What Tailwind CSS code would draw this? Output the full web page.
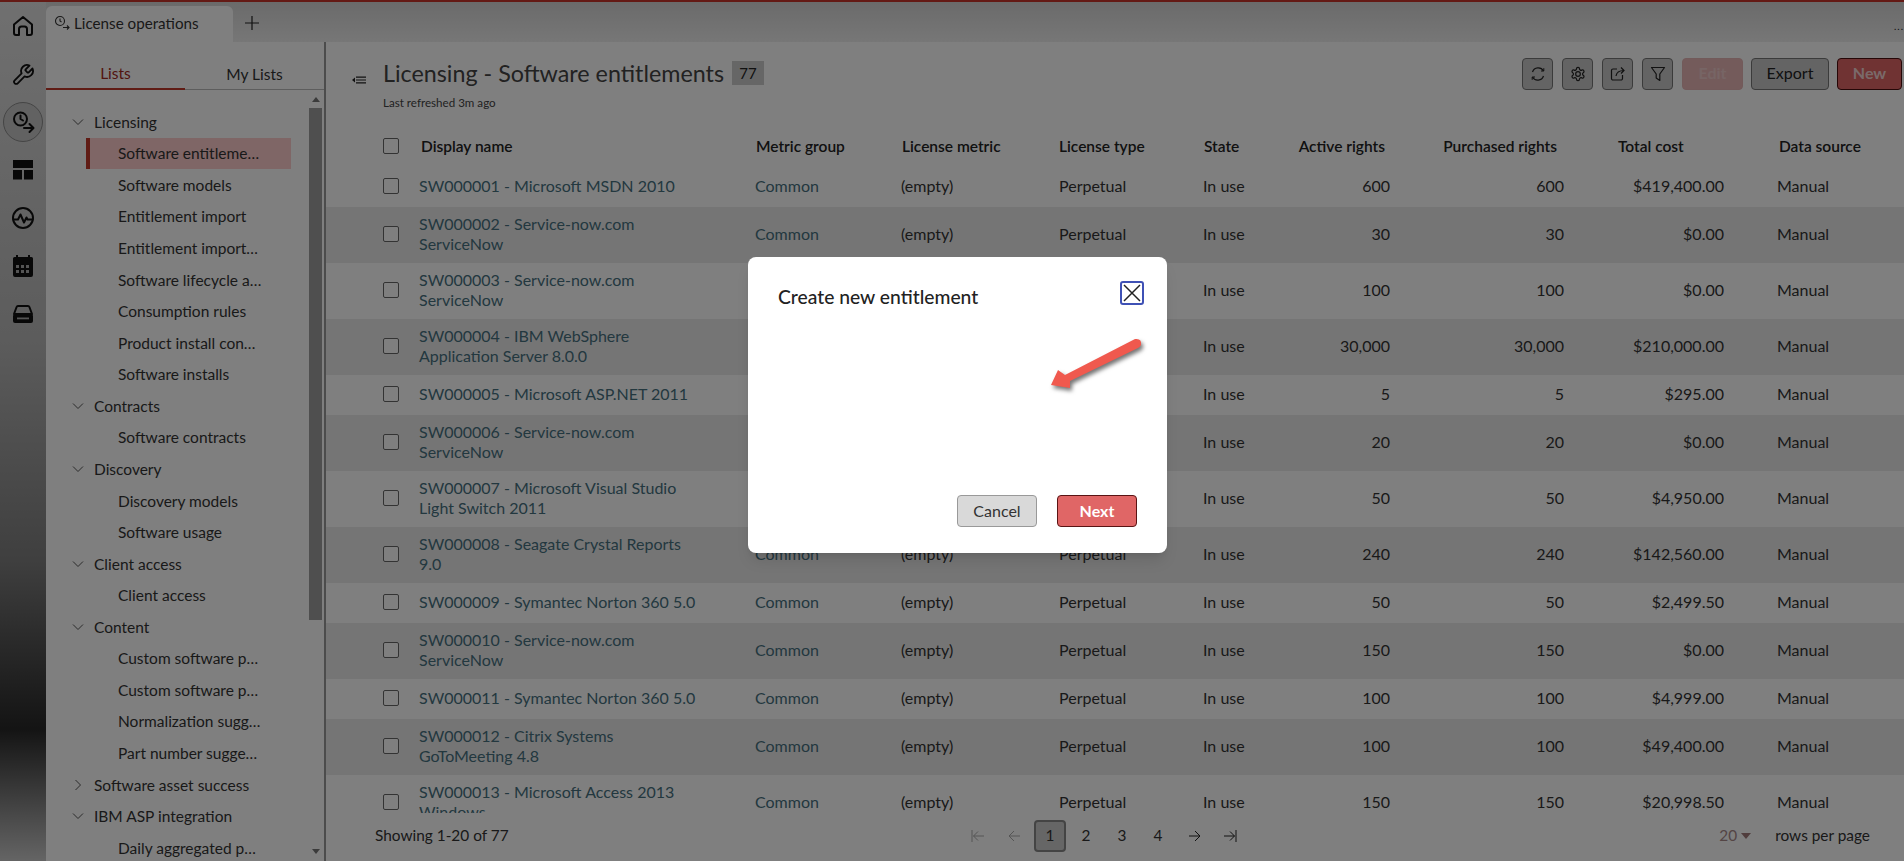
<!doctype html>
<html lang="en">
<head>
<meta charset="utf-8">
<title>License operations</title>
<script src="https://cdn.jsdelivr.net/npm/@tailwindcss/browser@4"></script>
</head>
<body class="relative h-[861px] w-[1904px] overflow-hidden bg-white font-['Lato',sans-serif] text-[#333]">
<div class="flex h-full flex-col">
  <div class="h-[2px] shrink-0 bg-[#c8352b]"></div>
  <div class="flex min-h-0 flex-1">
    <!-- rail -->
    <nav class="flex w-[46px] shrink-0 flex-col items-center bg-[linear-gradient(180deg,#e0e0e0_0,#b8b8b8_340px,#7e7e7e_560px,#282828_727px,#cccccc_861px)] pt-[8px] text-[#111]">
      <div class="flex h-[32px] w-[32px] items-center justify-center">
        <svg class="h-[24px] w-[24px]" viewBox="0 0 24 24" fill="none" stroke="currentColor" stroke-width="2" stroke-linejoin="round"><path d="M3 10.500 12 3l9 7.500V19a2 2 0 0 1-2 2h-3v-6a2.500 2.500 0 0 0-2.500-2.500h-3A2.500 2.500 0 0 0 8 15v6H5a2 2 0 0 1-2-2z"/></svg>
      </div>
      <div class="mt-[16px] flex h-[32px] w-[32px] items-center justify-center">
        <svg class="h-[24px] w-[24px] translate-y-[1px]" viewBox="0 0 24 24" fill="none" stroke="currentColor" stroke-width="1.800" stroke-linejoin="round"><path d="M14.700 6.300a1 1 0 0 0 0 1.400l1.600 1.600a1 1 0 0 0 1.400 0l3.800-3.800a6 6 0 0 1-7.900 7.900l-6.900 6.900a2.100 2.100 0 0 1-3-3l6.900-6.900a6 6 0 0 1 7.900-7.900z"/></svg>
      </div>
      <div class="mt-[12px] flex h-[40px] w-[40px] items-center justify-center rounded-full border border-[#8a8a8a] bg-[#c4c4c4]">
        <svg class="h-[24px] w-[24px]" viewBox="0 0 24 24" fill="none" stroke="currentColor" stroke-width="2" stroke-linecap="round" stroke-linejoin="round"><circle cx="9.500" cy="9" r="6.500"/><path d="M9.500 5.500V9l2.500 1.500M13 18h9M18.500 14l4 4-4 4"/></svg>
      </div>
      <div class="mt-[12px] flex h-[32px] w-[32px] items-center justify-center">
        <svg class="h-[22px] w-[22px]" viewBox="0 0 22 22" fill="currentColor"><rect x="1" y="1" width="20" height="8"/><rect x="1" y="11" width="9" height="9.500"/><rect x="12" y="11" width="9" height="9.500"/></svg>
      </div>
      <div class="mt-[16px] flex h-[32px] w-[32px] items-center justify-center">
        <svg class="h-[24px] w-[24px]" viewBox="0 0 24 24" fill="none" stroke="currentColor" stroke-width="2" stroke-linejoin="round" stroke-linecap="round"><circle cx="12" cy="12" r="10"/><path d="M2.500 13.500H7l2.500-5 3.500 8 2.500-5 1 2h5"/></svg>
      </div>
      <div class="mt-[16px] flex h-[32px] w-[32px] items-center justify-center">
        <svg class="h-[24px] w-[24px]" viewBox="0 0 24 24"><path fill="currentColor" d="M5 1h2v2h10V1h2v2h1.500A1.500 1.500 0 0 1 22 4.500V21a2 2 0 0 1-2 2H4a2 2 0 0 1-2-2V4.500A1.500 1.500 0 0 1 3.500 3H5z"/><g fill="#aaa"><rect x="5" y="11" width="3" height="3"/><rect x="10" y="11" width="3" height="3"/><rect x="15" y="11" width="3" height="3"/><rect x="5" y="16" width="3" height="3"/><rect x="10" y="16" width="3" height="3"/><rect x="15" y="16" width="3" height="3"/></g></svg>
      </div>
      <div class="mt-[16px] flex h-[32px] w-[32px] items-center justify-center">
        <svg class="h-[24px] w-[24px]" viewBox="0 0 24 24"><path d="M7 4h10a1.500 1.500 0 0 1 1.400 1L21 12H3l2.600-7A1.500 1.500 0 0 1 7 4z" fill="none" stroke="currentColor" stroke-width="2" stroke-linejoin="round"/><rect x="2" y="12" width="20" height="9" rx="2" fill="currentColor"/><rect x="6" y="15.500" width="12" height="1.800" fill="#aaa"/></svg>
      </div>
    </nav>

    <div class="flex min-w-0 flex-1 flex-col">
      <!-- tab bar -->
      <div class="flex h-[40px] shrink-0 items-end bg-linear-to-b from-[#d6d6d6] to-[#eeeeee]">
        <div class="flex h-[36px] w-[187px] items-center rounded-t-[6px] bg-white pb-[2px] pl-[8px] text-[15.200px]">
          <svg class="mr-[4px] h-[16px] w-[16px] shrink-0" viewBox="0 0 16 16" fill="none" stroke="currentColor" stroke-width="1.100"><circle cx="6" cy="6" r="4.500"/><path d="M6 3.500V6l1.500 1M9 12.500h6M13 10.500l2 2-2 2"/></svg>
          <span>License operations</span>
        </div>
        <div class="flex h-[36px] w-[38px] items-center justify-center pb-[2px]">
          <svg class="h-[14px] w-[14px]" viewBox="0 0 14 14" fill="none" stroke="#222" stroke-width="1.200"><path d="M7 0v14M0 7h14"/></svg>
        </div>
        <div class="ml-auto pb-[11px] text-[10px] leading-none tracking-[1px] text-[#222]">...</div>
      </div>

      <div class="flex min-h-0 flex-1">
        <!-- sidebar -->
        <aside class="relative flex w-[280px] shrink-0 flex-col border-r-2 border-[#999] bg-white">
          <div class="flex h-[48px] shrink-0 border-b border-[#bbb] text-[15.500px] leading-[20px]">
            <div class="-mb-[1px] flex w-[139px] items-center justify-center border-b-2 border-[#c0392b] pt-[16px] text-[#a52a22]">Lists</div>
            <div class="flex w-[139px] items-center justify-center pt-[16px]">My Lists</div>
          </div>
          <div class="relative flex-1 overflow-hidden pt-[16px] text-[15.500px] leading-[20px]">
            <ul class="w-[245px]">
              <li class="flex h-[31.570px] items-center pl-[26px]"><svg class="mr-[10px] h-[12px] w-[12px]" viewBox="0 0 12 12" fill="none" stroke="#555"><path d="M1 3.500l5 5 5-5"/></svg>Licensing</li>
              <li class="ml-[40px] flex h-[31.570px] w-[205px] items-center border-l-4 border-[#c0392b] bg-[#ffcccc] pl-[28px]">Software entitleme…</li>
              <li class="flex h-[31.570px] items-center pl-[72px]">Software models</li>
              <li class="flex h-[31.570px] items-center pl-[72px]">Entitlement import</li>
              <li class="flex h-[31.570px] items-center pl-[72px]">Entitlement import…</li>
              <li class="flex h-[31.570px] items-center pl-[72px]">Software lifecycle a…</li>
              <li class="flex h-[31.570px] items-center pl-[72px]">Consumption rules</li>
              <li class="flex h-[31.570px] items-center pl-[72px]">Product install con…</li>
              <li class="flex h-[31.570px] items-center pl-[72px]">Software installs</li>
              <li class="flex h-[31.570px] items-center pl-[26px]"><svg class="mr-[10px] h-[12px] w-[12px]" viewBox="0 0 12 12" fill="none" stroke="#555"><path d="M1 3.500l5 5 5-5"/></svg>Contracts</li>
              <li class="flex h-[31.570px] items-center pl-[72px]">Software contracts</li>
              <li class="flex h-[31.570px] items-center pl-[26px]"><svg class="mr-[10px] h-[12px] w-[12px]" viewBox="0 0 12 12" fill="none" stroke="#555"><path d="M1 3.500l5 5 5-5"/></svg>Discovery</li>
              <li class="flex h-[31.570px] items-center pl-[72px]">Discovery models</li>
              <li class="flex h-[31.570px] items-center pl-[72px]">Software usage</li>
              <li class="flex h-[31.570px] items-center pl-[26px]"><svg class="mr-[10px] h-[12px] w-[12px]" viewBox="0 0 12 12" fill="none" stroke="#555"><path d="M1 3.500l5 5 5-5"/></svg>Client access</li>
              <li class="flex h-[31.570px] items-center pl-[72px]">Client access</li>
              <li class="flex h-[31.570px] items-center pl-[26px]"><svg class="mr-[10px] h-[12px] w-[12px]" viewBox="0 0 12 12" fill="none" stroke="#555"><path d="M1 3.500l5 5 5-5"/></svg>Content</li>
              <li class="flex h-[31.570px] items-center pl-[72px]">Custom software p…</li>
              <li class="flex h-[31.570px] items-center pl-[72px]">Custom software p…</li>
              <li class="flex h-[31.570px] items-center pl-[72px]">Normalization sugg…</li>
              <li class="flex h-[31.570px] items-center pl-[72px]">Part number sugge…</li>
              <li class="flex h-[31.570px] items-center pl-[26px]"><svg class="mr-[10px] h-[12px] w-[12px]" viewBox="0 0 12 12" fill="none" stroke="#555"><path d="M3.500 1l5 5-5 5"/></svg>Software asset success</li>
              <li class="flex h-[31.570px] items-center pl-[26px]"><svg class="mr-[10px] h-[12px] w-[12px]" viewBox="0 0 12 12" fill="none" stroke="#555"><path d="M1 3.500l5 5 5-5"/></svg>IBM ASP integration</li>
              <li class="flex h-[31.570px] items-center pl-[72px]">Daily aggregated p…</li>
            </ul>
            <!-- scrollbar -->
            <div class="absolute inset-y-0 right-[2px] flex w-[13px] flex-col items-center">
              <div class="mt-[7px] h-0 w-0 border-x-[4px] border-b-[5px] border-x-transparent border-b-[#777]"></div>
              <div class="mt-[6px] h-[512px] w-[13px] bg-[#9e9e9e]"></div>
              <div class="mt-auto mb-[7px] h-0 w-0 border-x-[4px] border-t-[5px] border-x-transparent border-t-[#777]"></div>
            </div>
          </div>
        </aside>

        <!-- main -->
        <main class="flex min-w-0 flex-1 flex-col">
          <div class="relative flex h-[83px] shrink-0 pl-[57px] pr-[2px]">
            <svg class="absolute left-[26px] top-[31px] h-[14px] w-[14px]" viewBox="0 0 14 14" fill="#222"><path d="M0 7l3-2.500v5z"/><path d="M4 3.500h10v1.200H4zM4 6.400h10v1.200H4zM4 9.300h10v1.200H4z"/></svg>
            <div>
              <div class="mt-[19px] flex items-center">
                <h1 class="text-[23.300px] leading-[24px] font-normal text-[#444]">Licensing - Software entitlements</h1>
                <span class="ml-[8px] flex h-[24px] w-[32px] items-center justify-center bg-[#ccc] text-[15px] text-[#222]">77</span>
              </div>
              <p class="mt-[10px] text-[11.600px] leading-[16px] text-[#444]">Last refreshed 3m ago</p>
            </div>
            <div class="ml-auto mt-[16px] flex h-[32px] gap-[9px]">
              <button class="flex w-[31px] items-center justify-center rounded-[4px] border border-[#777] bg-[#c8c8c8]"><svg class="h-[16px] w-[16px]" viewBox="0 0 16 16" fill="none" stroke="#222" stroke-width="1.200"><path d="M13.500 5A6 6 0 0 0 2.500 6M2.500 11A6 6 0 0 0 13.500 10"/><path d="M11 5h2.800V2.200M5 11H2.200v2.800" stroke-width="1"/></svg></button>
              <button class="flex w-[31px] items-center justify-center rounded-[4px] border border-[#777] bg-[#c8c8c8]"><svg class="h-[16px] w-[16px]" viewBox="0 0 24 24" fill="none" stroke="#222" stroke-width="1.800"><path d="M12.220 2h-.44a2 2 0 0 0-2 2v.18a2 2 0 0 1-1 1.730l-.43.25a2 2 0 0 1-2 0l-.15-.08a2 2 0 0 0-2.730.73l-.22.38a2 2 0 0 0 .73 2.730l.15.1a2 2 0 0 1 1 1.720v.51a2 2 0 0 1-1 1.740l-.15.09a2 2 0 0 0-.73 2.730l.22.38a2 2 0 0 0 2.730.73l.15-.08a2 2 0 0 1 2 0l.43.25a2 2 0 0 1 1 1.730V20a2 2 0 0 0 2 2h.44a2 2 0 0 0 2-2v-.18a2 2 0 0 1 1-1.730l.43-.25a2 2 0 0 1 2 0l.15.08a2 2 0 0 0 2.730-.73l.22-.39a2 2 0 0 0-.73-2.730l-.15-.08a2 2 0 0 1-1-1.740v-.5a2 2 0 0 1 1-1.740l.15-.09a2 2 0 0 0 .73-2.730l-.22-.38a2 2 0 0 0-2.730-.73l-.15.08a2 2 0 0 1-2 0l-.43-.25a2 2 0 0 1-1-1.730V4a2 2 0 0 0-2-2z"/><circle cx="12" cy="12" r="3.500"/></svg></button>
              <button class="flex w-[31px] items-center justify-center rounded-[4px] border border-[#777] bg-[#c8c8c8]"><svg class="h-[16px] w-[16px]" viewBox="0 0 16 16" fill="none" stroke="#222" stroke-width="1.200"><path d="M7 3H3a1.500 1.500 0 0 0-1.500 1.500v8A1.500 1.500 0 0 0 3 14h8a1.500 1.500 0 0 0 1.500-1.500V9"/><path d="M6 10c.5-3.500 3-5.500 8-5.500M11 1.500l3 3-3 3"/></svg></button>
              <button class="flex w-[31px] items-center justify-center rounded-[4px] border border-[#777] bg-[#c8c8c8]"><svg class="h-[16px] w-[16px]" viewBox="0 0 16 16" fill="none" stroke="#222" stroke-width="1.200" stroke-linejoin="round"><path d="M1.500 1.500h13L9.800 8v6.500L6.200 12V8z"/></svg></button>
              <button class="w-[61px] rounded-[4px] border border-[#e4b4b4] bg-[#e9b7b7] pb-[2px] text-[16px] font-bold text-[#eecaca]">Edit</button>
              <button class="ml-[-1px] w-[78px] rounded-[4px] border border-[#777] bg-[#c8c8c8] pb-[2px] text-[16px] text-[#222]">Export</button>
              <button class="ml-[-1px] w-[65px] rounded-[4px] border border-[#4a0f0f] bg-[#e06666] pb-[2px] text-[16px] font-bold text-[#f5d5d5]">New</button>
            </div>
          </div>

          <!-- table -->
          <div class="min-h-0 flex-1 overflow-hidden">
            <table class="w-[1578px] table-fixed border-collapse text-[16px] leading-[20px] [&_td]:pb-[2px]">
              <colgroup>
                <col class="w-[93px]"><col class="w-[336px]"><col class="w-[146px]"><col class="w-[158px]"><col class="w-[144px]"><col class="w-[60px]"><col class="w-[127px]"><col class="w-[174px]"><col class="w-[160px]"><col class="w-[180px]">
              </colgroup>
              <thead>
                <tr class="h-[42px] text-[15.500px] text-[#222]">
                  <th class="pl-[57px]"><span class="block h-[16px] w-[16px] rounded-[2px] border border-[#666] bg-white"></span></th>
                  <th class="pl-[2px] text-left font-semibold">Display name</th>
                  <th class="pl-[1px] text-left font-semibold">Metric group</th>
                  <th class="pl-[1px] text-left font-semibold">License metric</th>
                  <th class="text-left font-semibold">License type</th>
                  <th class="pl-[1px] text-left font-semibold">State</th>
                  <th class="pr-[5px] text-right font-semibold whitespace-nowrap">Active rights</th>
                  <th class="pr-[7px] text-right font-semibold">Purchased rights</th>
                  <th class="pl-[54px] text-left font-semibold">Total cost</th>
                  <th class="pl-[55px] text-left font-semibold">Data source</th>
                </tr>
              </thead>
              <tbody>
                <tr class="h-[40px] bg-white"><td class="pl-[57px]"><span class="block h-[16px] w-[16px] rounded-[2px] border border-[#666] bg-white"></span></td><td class="pr-[55px] text-[#46707f]">SW000001 - Microsoft MSDN 2010</td><td class="text-[#46707f]">Common</td><td>(empty)</td><td>Perpetual</td><td>In use</td><td class="text-right">600</td><td class="text-right">600</td><td class="text-right">$419,400.00</td><td class="pl-[53px]">Manual</td></tr>
                <tr class="h-[56px] bg-[#ebebeb]"><td class="pl-[57px]"><span class="block h-[16px] w-[16px] rounded-[2px] border border-[#666] bg-white"></span></td><td class="pr-[55px] text-[#46707f]">SW000002 - Service-now.com ServiceNow</td><td class="text-[#46707f]">Common</td><td>(empty)</td><td>Perpetual</td><td>In use</td><td class="text-right">30</td><td class="text-right">30</td><td class="text-right">$0.00</td><td class="pl-[53px]">Manual</td></tr>
                <tr class="h-[56px] bg-white"><td class="pl-[57px]"><span class="block h-[16px] w-[16px] rounded-[2px] border border-[#666] bg-white"></span></td><td class="pr-[55px] text-[#46707f]">SW000003 - Service-now.com ServiceNow</td><td class="text-[#46707f]">Common</td><td>(empty)</td><td>Perpetual</td><td>In use</td><td class="text-right">100</td><td class="text-right">100</td><td class="text-right">$0.00</td><td class="pl-[53px]">Manual</td></tr>
                <tr class="h-[56px] bg-[#ebebeb]"><td class="pl-[57px]"><span class="block h-[16px] w-[16px] rounded-[2px] border border-[#666] bg-white"></span></td><td class="pr-[55px] text-[#46707f]">SW000004 - IBM WebSphere Application Server 8.0.0</td><td class="text-[#46707f]">Common</td><td>(empty)</td><td>Perpetual</td><td>In use</td><td class="text-right">30,000</td><td class="text-right">30,000</td><td class="text-right">$210,000.00</td><td class="pl-[53px]">Manual</td></tr>
                <tr class="h-[40px] bg-white"><td class="pl-[57px]"><span class="block h-[16px] w-[16px] rounded-[2px] border border-[#666] bg-white"></span></td><td class="pr-[55px] text-[#46707f]">SW000005 - Microsoft ASP.NET 2011</td><td class="text-[#46707f]">Common</td><td>(empty)</td><td>Perpetual</td><td>In use</td><td class="text-right">5</td><td class="text-right">5</td><td class="text-right">$295.00</td><td class="pl-[53px]">Manual</td></tr>
                <tr class="h-[56px] bg-[#ebebeb]"><td class="pl-[57px]"><span class="block h-[16px] w-[16px] rounded-[2px] border border-[#666] bg-white"></span></td><td class="pr-[55px] text-[#46707f]">SW000006 - Service-now.com ServiceNow</td><td class="text-[#46707f]">Common</td><td>(empty)</td><td>Perpetual</td><td>In use</td><td class="text-right">20</td><td class="text-right">20</td><td class="text-right">$0.00</td><td class="pl-[53px]">Manual</td></tr>
                <tr class="h-[56px] bg-white"><td class="pl-[57px]"><span class="block h-[16px] w-[16px] rounded-[2px] border border-[#666] bg-white"></span></td><td class="pr-[55px] text-[#46707f]">SW000007 - Microsoft Visual Studio Light Switch 2011</td><td class="text-[#46707f]">Common</td><td>(empty)</td><td>Perpetual</td><td>In use</td><td class="text-right">50</td><td class="text-right">50</td><td class="text-right">$4,950.00</td><td class="pl-[53px]">Manual</td></tr>
                <tr class="h-[56px] bg-[#ebebeb]"><td class="pl-[57px]"><span class="block h-[16px] w-[16px] rounded-[2px] border border-[#666] bg-white"></span></td><td class="pr-[55px] text-[#46707f]">SW000008 - Seagate Crystal Reports 9.0</td><td class="text-[#46707f]">Common</td><td>(empty)</td><td>Perpetual</td><td>In use</td><td class="text-right">240</td><td class="text-right">240</td><td class="text-right">$142,560.00</td><td class="pl-[53px]">Manual</td></tr>
                <tr class="h-[40px] bg-white"><td class="pl-[57px]"><span class="block h-[16px] w-[16px] rounded-[2px] border border-[#666] bg-white"></span></td><td class="pr-[55px] text-[#46707f]">SW000009 - Symantec Norton 360 5.0</td><td class="text-[#46707f]">Common</td><td>(empty)</td><td>Perpetual</td><td>In use</td><td class="text-right">50</td><td class="text-right">50</td><td class="text-right">$2,499.50</td><td class="pl-[53px]">Manual</td></tr>
                <tr class="h-[56px] bg-[#ebebeb]"><td class="pl-[57px]"><span class="block h-[16px] w-[16px] rounded-[2px] border border-[#666] bg-white"></span></td><td class="pr-[55px] text-[#46707f]">SW000010 - Service-now.com ServiceNow</td><td class="text-[#46707f]">Common</td><td>(empty)</td><td>Perpetual</td><td>In use</td><td class="text-right">150</td><td class="text-right">150</td><td class="text-right">$0.00</td><td class="pl-[53px]">Manual</td></tr>
                <tr class="h-[40px] bg-white"><td class="pl-[57px]"><span class="block h-[16px] w-[16px] rounded-[2px] border border-[#666] bg-white"></span></td><td class="pr-[55px] text-[#46707f]">SW000011 - Symantec Norton 360 5.0</td><td class="text-[#46707f]">Common</td><td>(empty)</td><td>Perpetual</td><td>In use</td><td class="text-right">100</td><td class="text-right">100</td><td class="text-right">$4,999.00</td><td class="pl-[53px]">Manual</td></tr>
                <tr class="h-[56px] bg-[#ebebeb]"><td class="pl-[57px]"><span class="block h-[16px] w-[16px] rounded-[2px] border border-[#666] bg-white"></span></td><td class="pr-[55px] text-[#46707f]">SW000012 - Citrix Systems GoToMeeting 4.8</td><td class="text-[#46707f]">Common</td><td>(empty)</td><td>Perpetual</td><td>In use</td><td class="text-right">100</td><td class="text-right">100</td><td class="text-right">$49,400.00</td><td class="pl-[53px]">Manual</td></tr>
                <tr class="h-[56px] bg-white"><td class="pl-[57px]"><span class="block h-[16px] w-[16px] rounded-[2px] border border-[#666] bg-white"></span></td><td class="pr-[55px] text-[#46707f]">SW000013 - Microsoft Access 2013 Windows</td><td class="text-[#46707f]">Common</td><td>(empty)</td><td>Perpetual</td><td>In use</td><td class="text-right">150</td><td class="text-right">150</td><td class="text-right">$20,998.50</td><td class="pl-[53px]">Manual</td></tr>
              </tbody>
            </table>
          </div>

          <!-- footer -->
          <div class="relative flex h-[48px] shrink-0 items-center bg-white pb-[2px] pl-[49px] text-[15.400px]">
            <span class="w-[596px]">Showing 1-20 of 77</span>
            <div class="flex items-center">
              <svg class="h-[14px] w-[14px]" viewBox="0 0 14 14" fill="none" stroke="#aaa"><path d="M1 1v12M13 7H2.500M7 2.500L2.500 7 7 11.500"/></svg>
              <svg class="ml-[22px] h-[14px] w-[14px]" viewBox="0 0 14 14" fill="none" stroke="#aaa"><path d="M13 7H2M7 2L2 7l5 5"/></svg>
              <span class="ml-[13px] flex h-[32px] w-[32px] items-center justify-center rounded-[4px] border-2 border-[#888] bg-[#ccc]">1</span>
              <span class="ml-[4px] flex h-[32px] w-[32px] items-center justify-center">2</span>
              <span class="ml-[4px] flex h-[32px] w-[32px] items-center justify-center">3</span>
              <span class="ml-[4px] flex h-[32px] w-[32px] items-center justify-center">4</span>
              <svg class="ml-[14px] h-[14px] w-[14px]" viewBox="0 0 14 14" fill="none" stroke="#222"><path d="M1 7h11M7 2l5 5-5 5"/></svg>
              <svg class="ml-[21px] h-[14px] w-[14px]" viewBox="0 0 14 14" fill="none" stroke="#222"><path d="M13 1v12M1 7h10.500M7 2.500L11.500 7 7 11.500"/></svg>
            </div>
            <div class="absolute right-[34px] flex items-center">
              <span class="text-[#a98a8a]">20</span>
              <span class="ml-[4px] h-0 w-0 border-x-[5px] border-t-[6px] border-x-transparent border-t-[#a07a7a]"></span>
              <span class="ml-[24px]">rows per page</span>
            </div>
          </div>
        </main>
      </div>
    </div>
  </div>
</div>

<!-- scrim -->
<div class="absolute inset-0 bg-black/50"></div>

<!-- dialog -->
<div class="absolute left-[748px] top-[257px] flex h-[296px] w-[419px] flex-col rounded-[8px] bg-white shadow-lg">
  <div class="flex items-start pl-[30px] pr-[23px] pt-[24px]">
    <h2 class="mt-[4px] flex-1 text-[19.300px] leading-[24px] font-medium text-[#222]">Create new entitlement</h2>
    <button class="flex h-[24px] w-[24px] items-center justify-center rounded-[3px] border-2 border-[#3f51b5]">
      <svg class="h-[20px] w-[20px]" viewBox="0 0 20 20" fill="none" stroke="#222" stroke-width="1.500"><path d="M2 2l16 16M18 2L2 18"/></svg>
    </button>
  </div>
  <svg class="absolute left-[295px] top-[78px] h-[60px] w-[100px] drop-shadow-[2px_3px_2px_rgba(0,0,0,0.55)]" viewBox="0 0 100 60"><path d="M8 50 15 35 22 40 92 4Q99 3 98 10 97 12 95 13L27 46 27 53Z" fill="#f0594e"/></svg>
  <div class="mt-auto flex justify-end gap-[20px] pb-[26px] pr-[30px]">
    <button class="h-[32px] w-[80px] rounded-[4px] border border-[#999] bg-[#d9d9d9] text-[16px] text-[#333]">Cancel</button>
    <button class="h-[32px] w-[80px] rounded-[4px] border border-[#5a1414] bg-[#e06666] text-[16px] font-bold text-white">Next</button>
  </div>
</div>
</body>
</html>
